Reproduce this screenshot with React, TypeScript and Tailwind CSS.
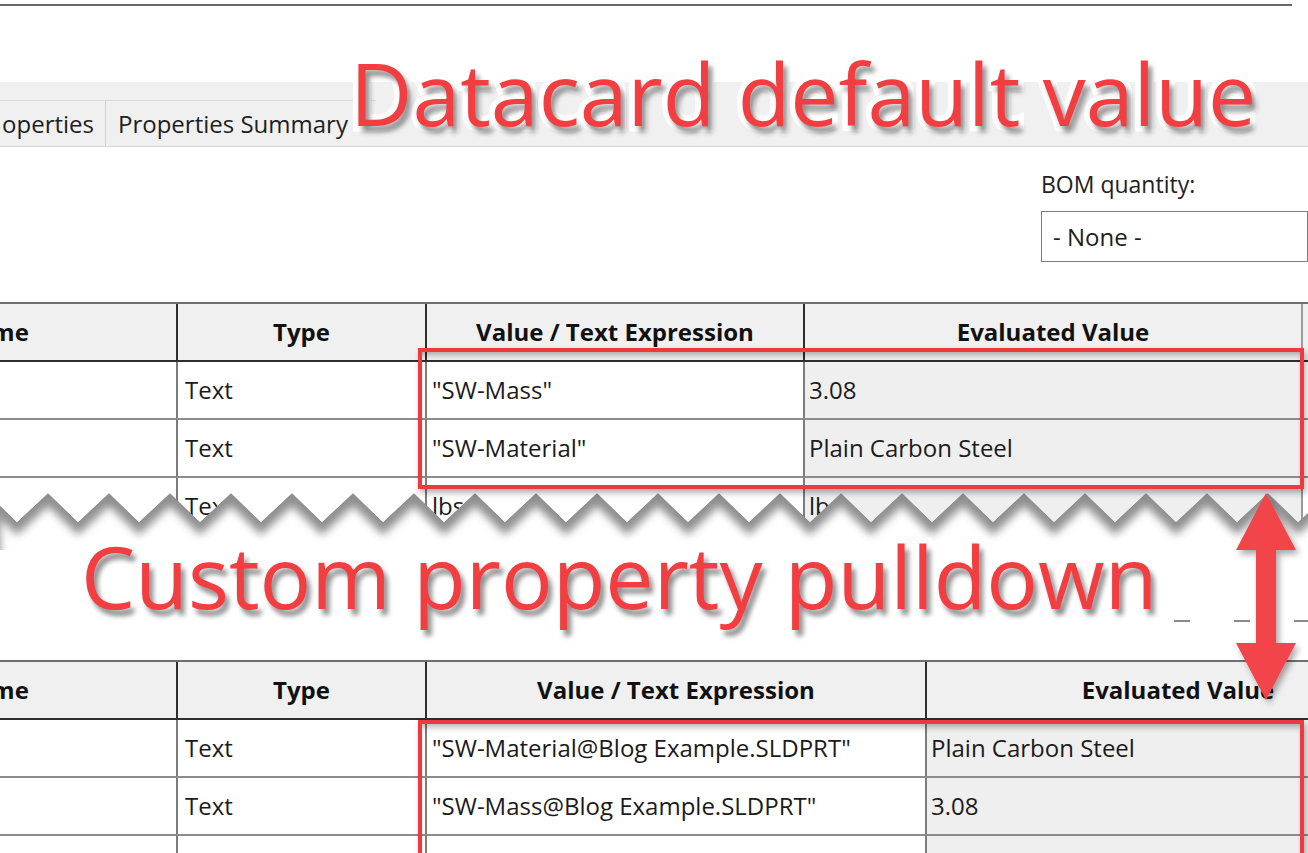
import React from "react";

const TEETH = 23;

function Tear() {
  // jagged paper edge between the two screenshot pieces
  const pts: string[] = ["0,60", "0,14"];
  for (let i = -1; i < TEETH; i++) {
    const peak = 48 + i * 61;
    pts.push(`${peak},3`);
    pts.push(`${peak + 30},32`);
  }
  pts.push("1308,60");
  const poly = pts.join(" ");
  return (
    <svg width="1308" height="60" viewBox="0 0 1308 60" className="absolute left-0 bottom-0">
      <defs>
        <clipPath id="tearclip">
          <polygon points={poly} />
        </clipPath>
        <filter id="tearblur" x="-5%" y="-50%" width="110%" height="200%">
          <feGaussianBlur stdDeviation="4" />
        </filter>
      </defs>
      <g clipPath="url(#tearclip)">
        <polygon points={poly} fill="#8f8f8f" />
        <polygon points={poly} fill="#ffffff" transform="translate(0 13)" filter="url(#tearblur)" />
      </g>
    </svg>
  );
}

type Row = { type: string; value: string; evaluated: string };

function PropTable({ cols, rows }: { cols: string[]; rows: Row[] }) {
  return (
    <div className="-ml-[190px] flex flex-col">
      <div className="flex h-[60px] border-t-2 border-b-2 border-t-[#6f6f6f] border-b-[#2e2e2e] bg-[#f0f0f0] text-[24px] font-bold text-[#111]">
        <div className={`${cols[0]} flex shrink-0 items-center justify-center border-r-2 border-[#2e2e2e]`}>Name</div>
        <div className={`${cols[1]} flex shrink-0 items-center justify-center border-r-2 border-[#2e2e2e]`}>Type</div>
        <div className={`${cols[2]} flex shrink-0 items-center justify-center border-r-2 border-[#2e2e2e]`}>Value / Text Expression</div>
        <div className={`${cols[3]} flex shrink-0 items-center justify-center border-r-2 border-[#9a9a9a]`}>Evaluated Value</div>
      </div>
      {rows.map((r, i) => (
        <div key={i} className="flex h-[58px] border-b-2 border-[#8c8c8c] text-[24px] text-[#1b1b1b]">
          <div className={`${cols[0]} shrink-0 border-r-2 border-[#7c7c7c] bg-white`} />
          <div className={`${cols[1]} flex shrink-0 items-center border-r-2 border-[#7c7c7c] bg-white pl-[7px]`}>{r.type}</div>
          <div className={`${cols[2]} flex shrink-0 items-center border-r-2 border-[#7c7c7c] bg-white pl-[5px]`}>{r.value}</div>
          <div className={`${cols[3]} flex shrink-0 items-center border-r-2 border-[#9a9a9a] bg-[#efefef] pl-[4px]`}>{r.evaluated}</div>
        </div>
      ))}
    </div>
  );
}

const callout =
  "absolute whitespace-nowrap text-[86px] leading-none text-[#f23d41] [paint-order:stroke_fill] [-webkit-text-stroke:11px_white] [text-shadow:4px_6px_5px_rgba(0,0,0,0.45)]";

export default function App() {
  return (
    <div className="relative h-[853px] w-[1308px] overflow-hidden bg-white font-['Open_Sans','Noto_Sans',sans-serif]">
      {/* top edge of the dialog */}
      <div className="h-[82px] pt-[4px]">
        <div className="h-[2px] w-[1292px] bg-[#6a6a6a]" />
      </div>

      {/* tab strip */}
      <div className="flex h-[65px] items-end border-b border-[#d6d6d6] bg-[#f0f0f0]">
        <div className="flex h-[46px] border-t border-[#d9d9d9] text-[24px] text-[#1e1e1e]">
          <div className="flex w-[106px] items-center justify-end border-r border-[#d3d3d3] pr-[11px]">
            <span className="whitespace-nowrap">operties</span>
          </div>
          <div className="flex w-[270px] items-center pl-[12px]">
            <span className="whitespace-nowrap">Properties Summary</span>
          </div>
        </div>
      </div>

      {/* BOM quantity */}
      <div className="flex h-[155px] justify-end">
        <div className="flex w-[267px] flex-col pt-[22px]">
          <span className="text-[23px] leading-[30px] text-[#222]">BOM quantity:</span>
          <div className="mt-[12px] flex h-[51px] items-center border border-[#7d7d7d] bg-white pl-[11px] text-[24px] text-[#1e1e1e]">
            - None -
          </div>
        </div>
      </div>

      {/* datacard table, torn off */}
      <div className="relative h-[248px] overflow-hidden">
        <PropTable
          cols={["w-[368px]", "w-[249px]", "w-[378px]", "w-[498px]"]}
          rows={[
            { type: "Text", value: "\"SW-Mass\"", evaluated: "3.08" },
            { type: "Text", value: "\"SW-Material\"", evaluated: "Plain Carbon Steel" },
            { type: "Text", value: "lbs", evaluated: "lbs" },
          ]}
        />
        <Tear />
      </div>

      {/* gap between pieces */}
      <div className="flex h-[110px] items-end justify-end pb-[38px]">
        <div className="flex gap-[44px]">
          <div className="h-[2px] w-[16px] bg-[#8a8a8a]" />
          <div className="h-[2px] w-[16px] bg-[#8a8a8a]" />
          <div className="h-[2px] w-[14px] bg-[#8a8a8a]" />
        </div>
      </div>

      {/* custom property table */}
      <PropTable
        cols={["w-[368px]", "w-[249px]", "w-[500px]", "w-[504px]"]}
        rows={[
          { type: "Text", value: "\"SW-Material@Blog Example.SLDPRT\"", evaluated: "Plain Carbon Steel" },
          { type: "Text", value: "\"SW-Mass@Blog Example.SLDPRT\"", evaluated: "3.08" },
          { type: "", value: "", evaluated: "" },
        ]}
      />

      {/* highlight boxes */}
      <div className="absolute left-[418px] top-[348px] h-[141px] w-[886px] border-4 border-[#ec3a3f] shadow-[2px_4px_6px_rgba(0,0,0,0.3),inset_0_6px_6px_-3px_rgba(0,0,0,0.3)]" />
      <div className="absolute left-[418px] top-[720px] h-[150px] w-[886px] border-4 border-[#ec3a3f] shadow-[2px_4px_6px_rgba(0,0,0,0.3),inset_0_6px_6px_-3px_rgba(0,0,0,0.3)]" />

      {/* double arrow */}
      <svg width="80" height="230" viewBox="0 0 80 230" className="absolute left-[1230px] top-[488px]">
        <defs>
          <filter id="arrowshadow" x="-30%" y="-10%" width="160%" height="120%">
            <feDropShadow dx="3" dy="4" stdDeviation="3" floodColor="#000" floodOpacity="0.35" />
          </filter>
        </defs>
        <polygon
          points="36,5 66,62 46,62 46,155 66,155 36,212 6,155 26,155 26,62 6,62"
          fill="#f1444a"
          filter="url(#arrowshadow)"
        />
      </svg>

      {/* callouts */}
      <span className={`${callout} left-[350px] top-[50px]`}>Datacard default value</span>
      <span className={`${callout} left-[81px] top-[533px]`}>Custom property pulldown</span>
    </div>
  );
}
